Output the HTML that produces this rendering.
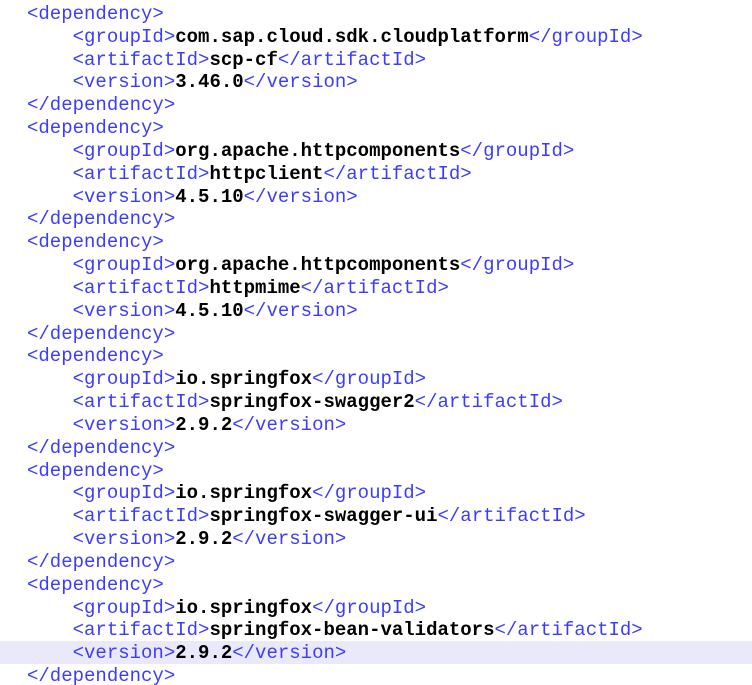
<!DOCTYPE html>
<html><head><style>
html,body{margin:0;padding:0;background:#fff;width:752px;height:685px;overflow:hidden}
pre{margin:0;padding:3px 0 0 27px;font-family:"Liberation Mono",monospace;font-size:19px;line-height:22.83px;color:#000;font-weight:bold;position:relative}
.t{color:#3c3cff;font-weight:normal}
.hl{position:absolute;left:0;top:641px;width:752px;height:23px;background:#e9e9fb}
</style></head><body>
<div class="hl"></div>
<pre><span class="t">&lt;dependency&gt;</span>
    <span class="t">&lt;groupId&gt;</span>com.sap.cloud.sdk.cloudplatform<span class="t">&lt;/groupId&gt;</span>
    <span class="t">&lt;artifactId&gt;</span>scp-cf<span class="t">&lt;/artifactId&gt;</span>
    <span class="t">&lt;version&gt;</span>3.46.0<span class="t">&lt;/version&gt;</span>
<span class="t">&lt;/dependency&gt;</span>
<span class="t">&lt;dependency&gt;</span>
    <span class="t">&lt;groupId&gt;</span>org.apache.httpcomponents<span class="t">&lt;/groupId&gt;</span>
    <span class="t">&lt;artifactId&gt;</span>httpclient<span class="t">&lt;/artifactId&gt;</span>
    <span class="t">&lt;version&gt;</span>4.5.10<span class="t">&lt;/version&gt;</span>
<span class="t">&lt;/dependency&gt;</span>
<span class="t">&lt;dependency&gt;</span>
    <span class="t">&lt;groupId&gt;</span>org.apache.httpcomponents<span class="t">&lt;/groupId&gt;</span>
    <span class="t">&lt;artifactId&gt;</span>httpmime<span class="t">&lt;/artifactId&gt;</span>
    <span class="t">&lt;version&gt;</span>4.5.10<span class="t">&lt;/version&gt;</span>
<span class="t">&lt;/dependency&gt;</span>
<span class="t">&lt;dependency&gt;</span>
    <span class="t">&lt;groupId&gt;</span>io.springfox<span class="t">&lt;/groupId&gt;</span>
    <span class="t">&lt;artifactId&gt;</span>springfox-swagger2<span class="t">&lt;/artifactId&gt;</span>
    <span class="t">&lt;version&gt;</span>2.9.2<span class="t">&lt;/version&gt;</span>
<span class="t">&lt;/dependency&gt;</span>
<span class="t">&lt;dependency&gt;</span>
    <span class="t">&lt;groupId&gt;</span>io.springfox<span class="t">&lt;/groupId&gt;</span>
    <span class="t">&lt;artifactId&gt;</span>springfox-swagger-ui<span class="t">&lt;/artifactId&gt;</span>
    <span class="t">&lt;version&gt;</span>2.9.2<span class="t">&lt;/version&gt;</span>
<span class="t">&lt;/dependency&gt;</span>
<span class="t">&lt;dependency&gt;</span>
    <span class="t">&lt;groupId&gt;</span>io.springfox<span class="t">&lt;/groupId&gt;</span>
    <span class="t">&lt;artifactId&gt;</span>springfox-bean-validators<span class="t">&lt;/artifactId&gt;</span>
    <span class="t">&lt;version&gt;</span>2.9.2<span class="t">&lt;/version&gt;</span>
<span class="t">&lt;/dependency&gt;</span></pre>
</body></html>
